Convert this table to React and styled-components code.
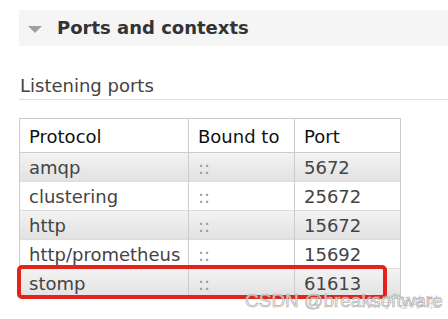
import React from "react";
import styled, { createGlobalStyle } from "styled-components";

const GlobalStyle = createGlobalStyle`
  html, body {
    margin: 0;
    padding: 0;
    background: #fff;
  }
  body {
    font-family: "DejaVu Sans", Verdana, sans-serif;
  }
`;

const ports = [
  { protocol: "amqp", bound: "::", port: "5672" },
  { protocol: "clustering", bound: "::", port: "25672" },
  { protocol: "http", bound: "::", port: "15672" },
  { protocol: "http/prometheus", bound: "::", port: "15692" },
  { protocol: "stomp", bound: "::", port: "61613" },
];

const App = () => {
  return (
    <Page>
      <GlobalStyle />
      <SectionBar>
        <Caret />
        <SectionTitle>Ports and contexts</SectionTitle>
      </SectionBar>
      <SubHeading>Listening ports</SubHeading>
      <TableWrap>
        <PortTable>
          <thead>
            <tr>
              <Th width={169}>Protocol</Th>
              <Th width={106}>Bound to</Th>
              <Th width={106}>Port</Th>
            </tr>
          </thead>
          <tbody>
            {ports.map((p, i) => (
              <Row key={p.protocol} alt={i % 2 === 0 ? 1 : 0}>
                <Td>{p.protocol}</Td>
                <Td muted={1}>{p.bound}</Td>
                <Td>{p.port}</Td>
              </Row>
            ))}
          </tbody>
        </PortTable>
        <Highlight />
      </TableWrap>
      <Watermark>
        <Zhihu>知乎 @哆啦</Zhihu>
        <Csdn>CSDN @breaksoftware</Csdn>
      </Watermark>
    </Page>
  );
};

const Page = styled.div`
  position: relative;
  width: 448px;
  height: 319px;
  overflow: hidden;
  padding: 10px 0 0 19px;
  box-sizing: border-box;
`;

const SectionBar = styled.div`
  height: 36px;
  background: #f5f5f5;
  display: flex;
  align-items: center;
  padding-left: 9px;
  gap: 15px;
`;

const Caret = styled.span`
  width: 0;
  height: 0;
  border-left: 7px solid transparent;
  border-right: 7px solid transparent;
  border-top: 7px solid #a0a0a0;
  margin-top: 2px;
`;

const SectionTitle = styled.h2`
  margin: 0;
  font-size: 18px;
  font-weight: bold;
  color: #333;
  line-height: 22px;
`;

const SubHeading = styled.h3`
  margin: 29px 0 0;
  padding: 0 0 2px 1px;
  font-size: 18px;
  font-weight: normal;
  line-height: 22px;
  color: #444;
  border-bottom: 1px solid #ddd;
`;

const TableWrap = styled.div`
  position: relative;
  margin-top: 18px;
`;

const PortTable = styled.table`
  border-collapse: collapse;
  table-layout: fixed;
  width: 382px;
  border: 1px solid #ccc;
  font-size: 18px;
`;

const Th = styled.th`
  width: ${(p) => p.width}px;
  height: 34px;
  padding: 2px 9px 0;
  text-align: left;
  font-weight: normal;
  color: #111;
  background: #fff;
  border: 1px solid #ccc;
  box-sizing: border-box;
  vertical-align: middle;
`;

const Row = styled.tr`
  background: ${(p) =>
    p.alt ? "linear-gradient(to bottom, #f3f3f3, #e1e1e1)" : "#fff"};
`;

const Td = styled.td`
  height: 29px;
  padding: 1px 9px 0;
  color: ${(p) => (p.muted ? "#999" : "#444")};
  border-top: 1px solid #ddd;
  border-left: 1px solid #ccc;
  border-right: 1px solid #ccc;
  box-sizing: border-box;
  white-space: nowrap;
`;

const Highlight = styled.div`
  position: absolute;
  left: -2px;
  top: 147px;
  width: 370px;
  height: 34px;
  border: 4px solid #e5231d;
  border-radius: 5px;
  box-sizing: border-box;
`;

const Watermark = styled.div`
  position: absolute;
  left: 245px;
  top: 290px;
  width: 200px;
  height: 24px;
  pointer-events: none;
`;

const Zhihu = styled.span`
  position: absolute;
  left: 122px;
  top: 1px;
  font-family: "Noto Sans CJK SC", sans-serif;
  font-size: 14px;
  color: rgba(170, 170, 170, 0.5);
  white-space: nowrap;
`;

const Csdn = styled.span`
  position: absolute;
  left: 0;
  top: 0;
  font-family: "Liberation Sans", Arial, sans-serif;
  font-size: 19px;
  line-height: 22px;
  color: rgba(235, 235, 235, 0.8);
  -webkit-text-stroke: 0.6px #a8a8a8;
  white-space: nowrap;
`;

export default App;
